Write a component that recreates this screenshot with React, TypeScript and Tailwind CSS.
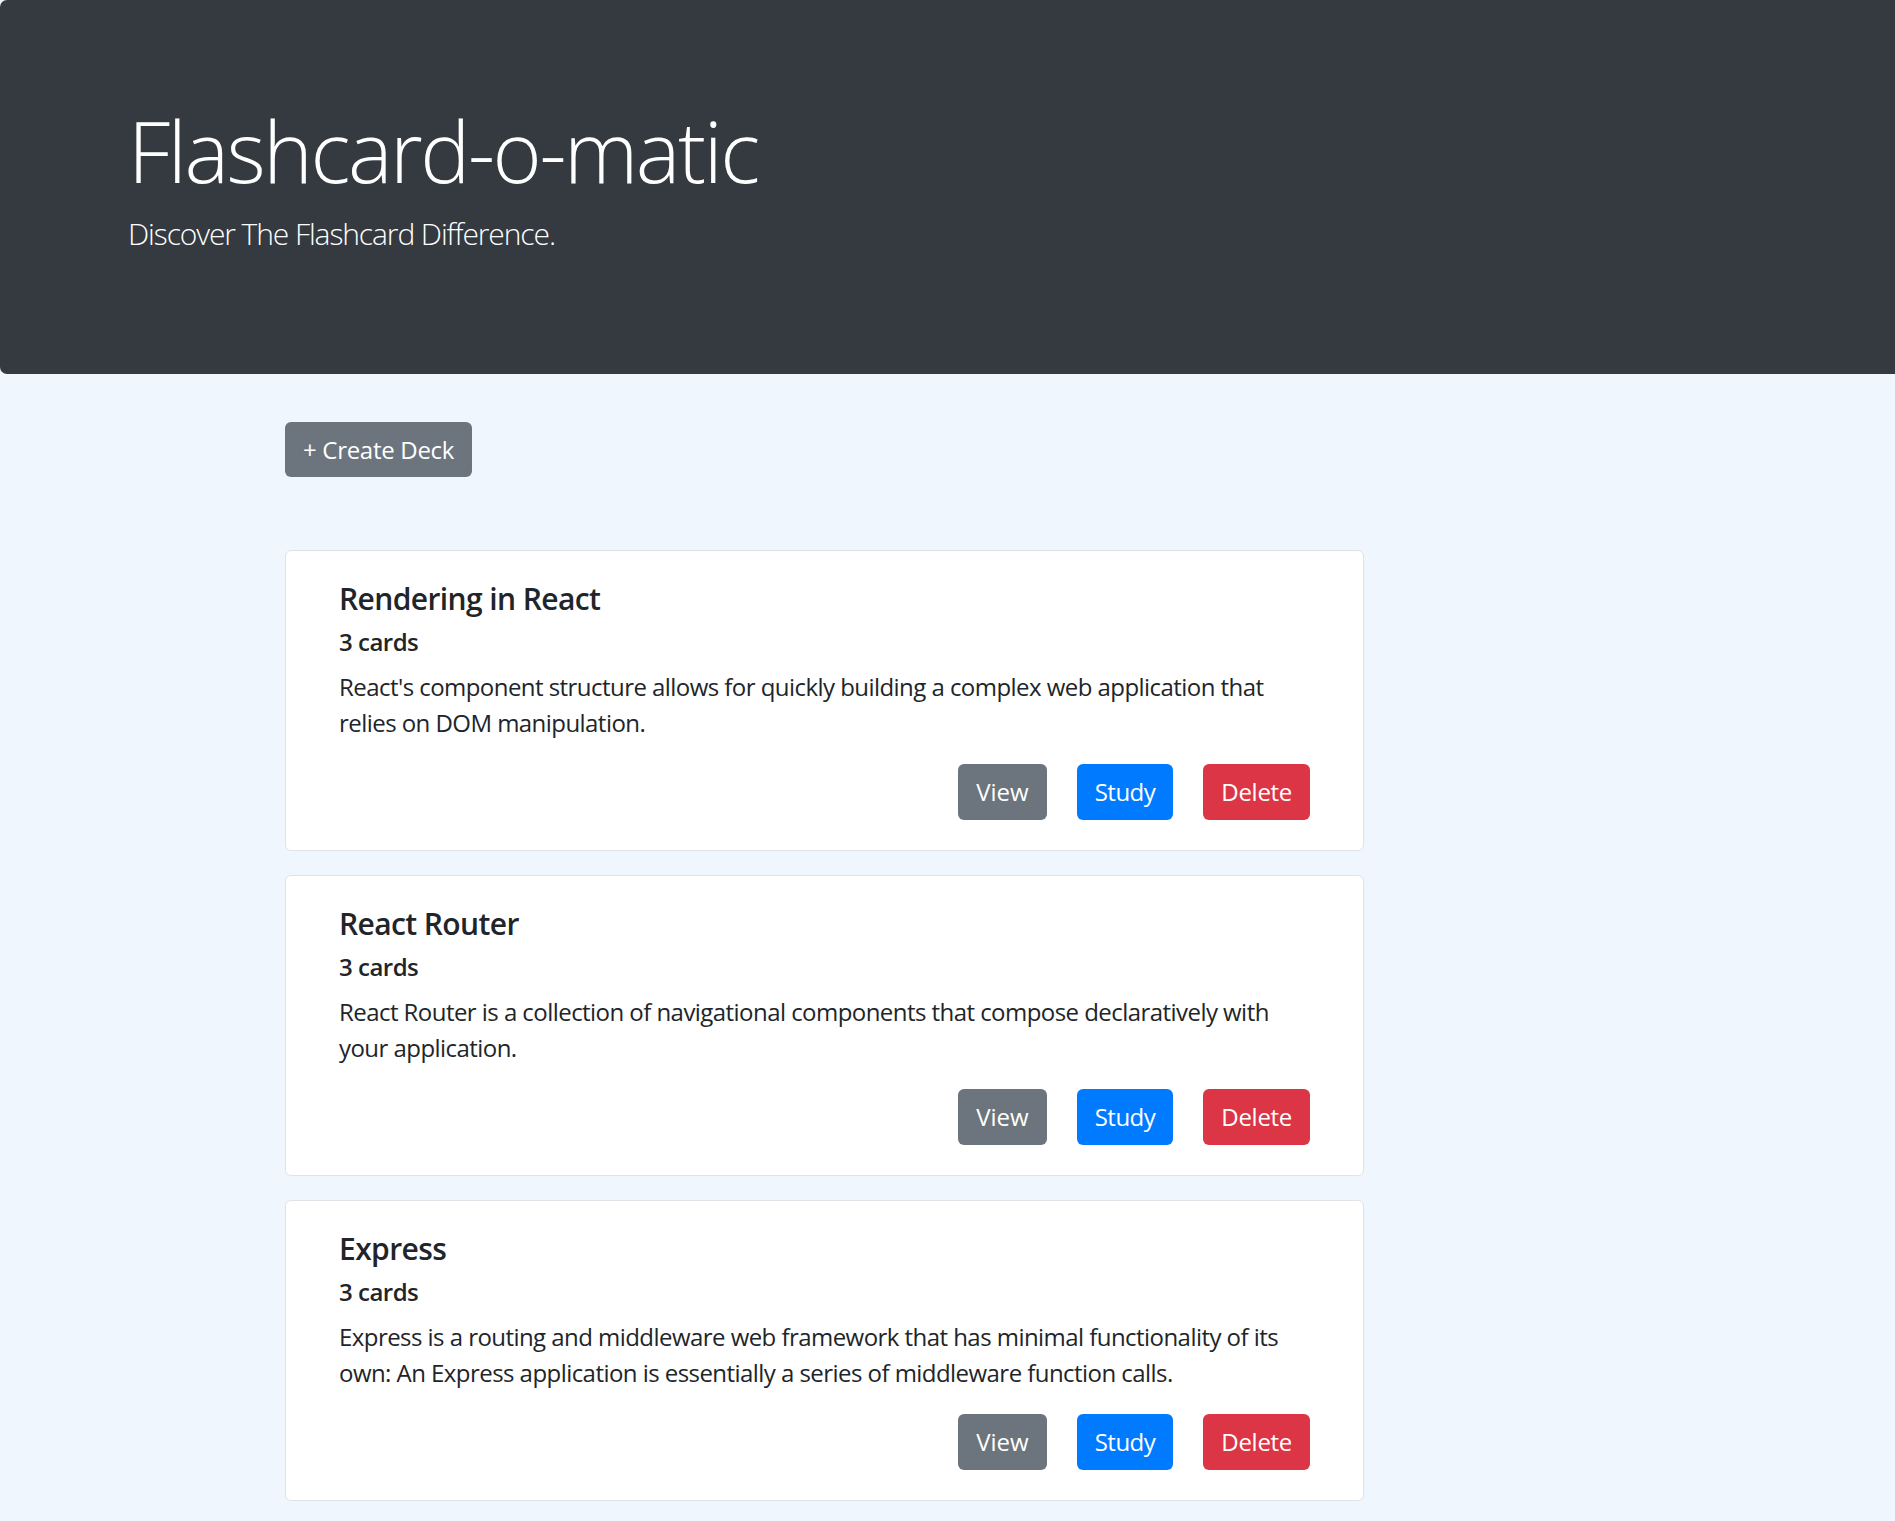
import React from 'react';

interface Deck {
  id: number;
  name: string;
  description: string;
  count: number;
}

const decks: Deck[] = [
  {
    id: 1,
    name: 'Rendering in React',
    description:
      "React's component structure allows for quickly building a complex web application that relies on DOM manipulation.",
    count: 3,
  },
  {
    id: 2,
    name: 'React Router',
    description:
      'React Router is a collection of navigational components that compose declaratively with your application.',
    count: 3,
  },
  {
    id: 3,
    name: 'Express',
    description:
      'Express is a routing and middleware web framework that has minimal functionality of its own: An Express application is essentially a series of middleware function calls.',
    count: 3,
  },
];

function DeckCard({ deck }: { deck: Deck }) {
  return (
    <div className="bg-white border border-[#dfe3e7] rounded-[6px] px-[53px] pt-[30px] pb-[30px]">
      <h5 className="text-[30px] leading-[36px] font-semibold tracking-[-0.6px] text-[#212529] mb-[10px]">{deck.name}</h5>
      <h6 className="text-[24px] leading-[29px] font-semibold tracking-[-0.5px] text-[#212529] mb-[13px]">{deck.count} cards</h6>
      <p className="text-[24px] leading-[36px] tracking-[-0.55px] text-[#212529] mb-[23px]">{deck.description}</p>
      <div className="flex justify-end gap-[30px]">
        <button className="h-[56px] px-[18px] rounded-[6px] bg-[#6c757d] text-white text-[24px]">View</button>
        <button className="h-[56px] px-[18px] rounded-[6px] bg-[#007bff] text-white text-[24px] tracking-[-0.5px]">Study</button>
        <button className="h-[56px] px-[18px] rounded-[6px] bg-[#dc3545] text-white text-[24px] tracking-[-0.3px]">Delete</button>
      </div>
    </div>
  );
}

export default function App() {
  return (
    <div className="min-h-screen bg-[#eff6fe] font-['Open_Sans',sans-serif] text-[#212529]">
      {/* Jumbotron */}
      <div className="bg-[#343a40] text-white rounded-l-[7px] h-[374px] px-[128px] pt-[100px]">
        <h1 className="text-[84px] leading-[101px] font-light tracking-[-2.4px] mb-[10px]">Flashcard-o-matic</h1>
        <p className="text-[30px] leading-[45px] font-light tracking-[-1.1px]">Discover The Flashcard Difference.</p>
      </div>

      {/* Decks */}
      <div className="pl-[285px] pt-[48px] w-[1364px]">
        <button className="h-[55px] px-[18px] rounded-[6px] bg-[#6c757d] text-white text-[24px] tracking-[-0.3px]">+ Create Deck</button>
        <div className="flex flex-col gap-[24px] mt-[73px]">
          {decks.map((deck) => (
            <DeckCard key={deck.id} deck={deck} />
          ))}
        </div>
      </div>
    </div>
  );
}
